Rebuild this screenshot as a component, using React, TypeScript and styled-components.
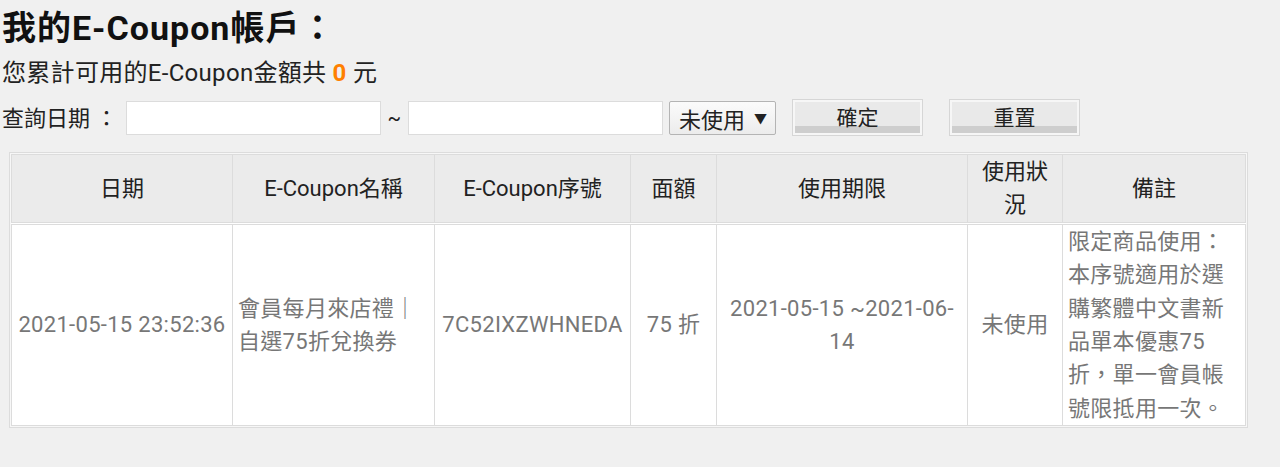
import React from "react"
import styled, { createGlobalStyle } from "styled-components"

const GlobalStyle = createGlobalStyle`
  html, body {
    margin: 0;
    padding: 0;
    background: #f0f0f0;
  }
  body {
    font-family: Roboto, "Noto Sans CJK TC", sans-serif;
    color: #222;
  }
`

const Page = styled.div`
  padding: 0 2px;
  width: 1276px;
  height: 467px;
  overflow: hidden;
`

const Title = styled.h1`
  margin: 0;
  padding-top: 8px;
  font-size: 34px;
  line-height: 40px;
  font-weight: 700;
  color: #111;
  letter-spacing: 1px;
`

const Summary = styled.div`
  margin-top: 8px;
  font-size: 24px;
  line-height: 34px;
  color: #222;
  letter-spacing: 0.3px;
`

const Amount = styled.span`
  color: #ff8000;
  font-weight: 700;
`

const QueryRow = styled.div`
  margin-top: 9px;
  height: 37px;
  display: flex;
  align-items: center;
  font-size: 22px;
`

const Label = styled.span`
  margin-right: 9px;
  margin-top: -4px;
  white-space: pre;
`

const DateInput = styled.input`
  box-sizing: border-box;
  width: 255px;
  height: 34px;
  border: 1px solid #dcdcdc;
  background: #fff;
  font-size: 20px;
  padding: 0 6px;
  outline: none;
`

const Tilde = styled.span`
  margin: 0 7px 0 6px;
  font-size: 20px;
`

const SelectBox = styled.div`
  box-sizing: border-box;
  margin-left: 6px;
  width: 107px;
  height: 34px;
  border: 1px solid #b4b4b4;
  border-radius: 2px;
  background: linear-gradient(#fbfbfb, #ececec);
  display: flex;
  align-items: center;
  padding-left: 9px;
  font-size: 22px;
  color: #222;
`

const Caret = styled.span`
  font-size: 13px;
  margin-left: 9px;
`

const FaceButton = styled.button<{ $gap: number }>`
  box-sizing: border-box;
  margin-left: ${(p) => p.$gap}px;
  width: 131px;
  height: 37px;
  padding: 2px;
  border: 1px solid #d6d6d6;
  background: linear-gradient(#e9e9e9 0, #e9e9e9 76%, #cecece 76%, #cecece 100%) content-box, #f6f6f6;
  font-family: Roboto, "Noto Sans CJK TC", sans-serif;
  font-size: 21px;
  line-height: 26px;
  color: #222;
  cursor: pointer;
`

const TableFrame = styled.div`
  margin: 16px 0 0 7px;
  width: 1239px;
  box-sizing: border-box;
  border: 1px solid #dcdcdc;
  padding: 1px;
  background: #f7f7f7;
`

const Table = styled.table`
  width: 1235px;
  border-collapse: collapse;
  table-layout: fixed;
  background: #fff;
  font-size: 22px;
  line-height: 33.4px;
`

const Th = styled.th`
  background: #ebebeb;
  border: 1px solid #dcdcdc;
  border-bottom: 3px double #dcdcdc;
  padding: 0 5px;
  font-weight: 400;
  color: #222;
  text-align: center;
  vertical-align: middle;
`

const Td = styled.td<{ $left?: boolean }>`
  border: 1px solid #dcdcdc;
  padding: 0 5px;
  color: #777;
  letter-spacing: 0.3px;
  text-align: ${(p) => (p.$left ? "left" : "center")};
  vertical-align: middle;
`

const columns = [221, 202, 196, 86, 251, 95, 183]
const headers = ["日期", "E-Coupon名稱", "E-Coupon序號", "面額", "使用期限", "使用狀況", "備註"]

export default function App() {
  return (
    <Page>
      <GlobalStyle />
      <Title>我的E-Coupon帳戶：</Title>
      <Summary>
        您累計可用的E-Coupon金額共 <Amount>0</Amount> 元
      </Summary>
      <QueryRow>
        <Label>查詢日期 ：</Label>
        <DateInput />
        <Tilde>~</Tilde>
        <DateInput />
        <SelectBox>
          未使用<Caret>▼</Caret>
        </SelectBox>
        <FaceButton $gap={16}>確定</FaceButton>
        <FaceButton $gap={26}>重置</FaceButton>
      </QueryRow>
      <TableFrame>
        <Table>
          <colgroup>
            {columns.map((w, i) => (
              <col key={i} style={{ width: w }} />
            ))}
          </colgroup>
          <thead>
            <tr>
              {headers.map((h) => (
                <Th key={h}>{h}</Th>
              ))}
            </tr>
          </thead>
          <tbody>
            <tr>
              <Td>2021-05-15 23:52:36</Td>
              <Td $left>會員每月來店禮｜自選75折兌換券</Td>
              <Td>7C52IXZWHNEDA</Td>
              <Td>75 折</Td>
              <Td>
                2021-05-15 ~2021-06-<wbr />14
              </Td>
              <Td>未使用</Td>
              <Td $left>限定商品使用：本序號適用於選購繁體中文書新品單本優惠75折，單一會員帳號限抵用一次。</Td>
            </tr>
          </tbody>
        </Table>
      </TableFrame>
    </Page>
  )
}
